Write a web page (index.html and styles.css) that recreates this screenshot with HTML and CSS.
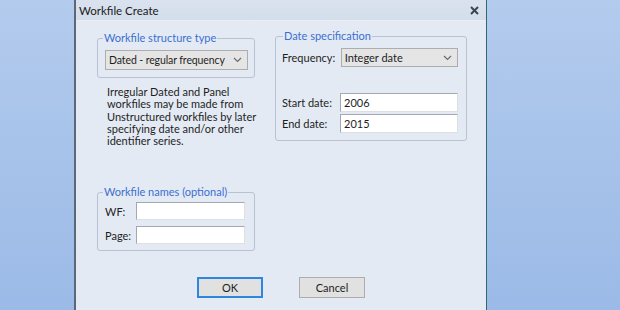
FILE: index.html
```html
<!DOCTYPE html>
<html lang="en">
<head>
    <meta charset="UTF-8">
    <title>Workfile Create</title>
    <link rel="stylesheet" href="styles.css">
</head>
<body>
    <div class="dialog">
        <div class="titlebar">
            <span class="title">Workfile Create</span>
            <svg class="close" width="9" height="9" viewBox="0 0 9 9">
                <path d="M1 1 L8 8 M8 1 L1 8" stroke="#3a4453" stroke-width="2"/>
            </svg>
        </div>
        <div class="content">
            <div class="columns">
                <div class="left">
                    <fieldset class="group group-structure">
                        <legend>Workfile structure type</legend>
                        <div class="combo combo-structure">
                            <span>Dated - regular frequency</span>
                            <svg width="9" height="6" viewBox="0 0 9 6"><path d="M1 1 L4.5 4.5 L8 1" fill="none" stroke="#6a6a6a" stroke-width="1.2"/></svg>
                        </div>
                    </fieldset>
                    <p class="note">Irregular Dated and Panel workfiles may be made from Unstructured workfiles by later specifying date and/or other identifier series.</p>
                    <fieldset class="group group-names">
                        <legend>Workfile names (optional)</legend>
                        <div class="row">
                            <label class="lbl-short">WF:</label>
                            <input class="field field-name" type="text">
                        </div>
                        <div class="row">
                            <label class="lbl-short">Page:</label>
                            <input class="field field-name" type="text">
                        </div>
                    </fieldset>
                </div>
                <div class="right">
                    <fieldset class="group group-date">
                        <legend>Date specification</legend>
                        <div class="row">
                            <label class="lbl-long">Frequency:</label>
                            <div class="combo combo-freq">
                                <span>Integer date</span>
                                <svg width="9" height="6" viewBox="0 0 9 6"><path d="M1 1 L4.5 4.5 L8 1" fill="none" stroke="#6a6a6a" stroke-width="1.2"/></svg>
                            </div>
                        </div>
                        <div class="row row-start">
                            <label class="lbl-long">Start date:</label>
                            <input class="field field-date" type="text" value="2006">
                        </div>
                        <div class="row row-end">
                            <label class="lbl-long">End date:</label>
                            <input class="field field-date" type="text" value="2015">
                        </div>
                    </fieldset>
                </div>
            </div>
            <div class="buttons">
                <button class="btn btn-default">OK</button>
                <button class="btn">Cancel</button>
            </div>
        </div>
    </div>
</body>
</html>
```

FILE: styles.css
```css
body {
    margin: 0;
    padding: 0;
    height: 310px;
    overflow: hidden;
    background: linear-gradient(#b3cbed, #9bbae7);
    font-family: Lato, "Noto Sans", sans-serif;
    font-size: 11px;
    color: #1e1e1e;
}
.dialog {
    margin-left: 74px;
    width: 410px;
    height: 310px;
    overflow: hidden;
    background-color: #e4eaf3;
    border-left: 2px solid #5c6878;
    border-right: 1px solid #2f6a74;
}
.titlebar {
    height: 20px;
    display: flex;
    align-items: center;
    justify-content: space-between;
    padding: 0 7px 0 3px;
    background: linear-gradient(#d9e2ee, #d4deeb);
    border-bottom: 1px solid #e9eef5;
}
.title {
    font-size: 11.5px;
    color: #1a1a1a;
}
.close {
    margin-top: 1px;
}
.content {
    padding-left: 21px;
}
.columns {
    display: flex;
    gap: 20px;
    align-items: flex-start;
}
.left {
    width: 158px;
    padding-top: 11px;
}
.right {
    width: 192px;
    padding-top: 9px;
}
.group {
    margin: 0;
    border: 1px solid #b8c2d2;
    border-radius: 3px;
    min-width: 0;
}
.group legend {
    padding: 0 1px;
    margin-left: -2px;
    line-height: 12px;
    color: #3b6fd1;
}
.group-date legend {
    margin-left: 1px;
}
.group-structure {
    padding: 6px 6px 7px 7px;
}
.combo {
    display: flex;
    align-items: center;
    justify-content: space-between;
    box-sizing: border-box;
    background-color: #e5e5e5;
    border: 1px solid #adadad;
    padding: 0 5px 0 3px;
    white-space: nowrap;
}
.combo-structure {
    width: 143px;
    height: 20px;
    font-size: 10.5px;
    letter-spacing: -0.1px;
}
.combo-freq {
    width: 118px;
    height: 19px;
}
.note {
    margin: 8px 0 0 10px;
    line-height: 12.3px;
    width: 150px;
}
.group-names {
    margin-top: 39px;
    padding: 4px 8px 6px 7px;
}
.row {
    display: flex;
    align-items: center;
}
.group-names .row + .row {
    margin-top: 6px;
}
.lbl-short {
    width: 31px;
}
.lbl-long {
    width: 59px;
}
.field {
    box-sizing: border-box;
    height: 18px;
    margin: 0;
    padding: 0 3px;
    background-color: white;
    border: 1px solid #dcdfe4;
    border-top-color: #a3a9b2;
    border-left-color: #a3a9b2;
    font-family: Lato, "Noto Sans", sans-serif;
    font-size: 11px;
    color: #1e1e1e;
}
.field-name {
    width: 109px;
}
.field-date {
    width: 118px;
    height: 19px;
}
.group-date {
    padding: 6px 8px 7px 6px;
}
.row-start {
    margin-top: 26px;
}
.row-end {
    margin-top: 2px;
}
.buttons {
    display: flex;
    justify-content: center;
    gap: 36px;
    margin-top: 26px;
    padding-right: 21px;
}
.btn {
    box-sizing: border-box;
    width: 66px;
    height: 21px;
    background-color: #e1e1e1;
    border: 1px solid #adadad;
    font-family: Lato, "Noto Sans", sans-serif;
    font-size: 11px;
    color: #1e1e1e;
    padding: 0;
}
.btn-default {
    border: 2px solid #2f86de;
}
```
